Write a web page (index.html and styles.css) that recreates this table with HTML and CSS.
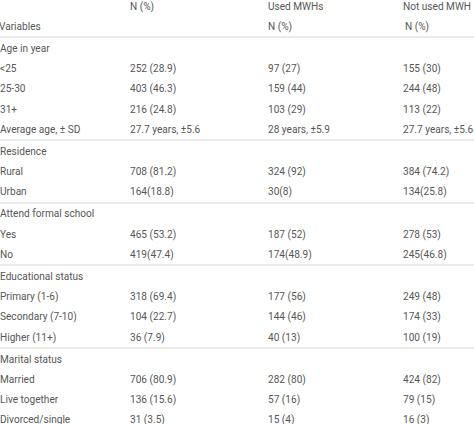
FILE: index.html
```html
<!DOCTYPE html>
<html>
<head>
<meta charset="utf-8">
<link rel="stylesheet" href="styles.css">
</head>
<body>
<div class="table">
  <div class="row"><div></div><div>N (%)</div><div>Used MWHs</div><div>Not used MWH</div></div>
  <div class="row"><div class="first">Variables</div><div></div><div>N (%)</div><div class="nudge">N (%)</div></div>
  <div class="row sep"><div>Age in year</div><div></div><div></div><div></div></div>
  <div class="row"><div>&lt;25</div><div>252 (28.9)</div><div>97 (27)</div><div>155 (30)</div></div>
  <div class="row"><div>25-30</div><div>403 (46.3)</div><div>159 (44)</div><div>244 (48)</div></div>
  <div class="row"><div>31+</div><div>216 (24.8)</div><div>103 (29)</div><div>113 (22)</div></div>
  <div class="row"><div>Average age, ± SD</div><div>27.7 years, ±5.6</div><div>28 years, ±5.9</div><div>27.7 years, ±5.6</div></div>
  <div class="row sep"><div>Residence</div><div></div><div></div><div></div></div>
  <div class="row"><div>Rural</div><div>708 (81.2)</div><div>324 (92)</div><div>384 (74.2)</div></div>
  <div class="row"><div>Urban</div><div>164(18.8)</div><div>30(8)</div><div>134(25.8)</div></div>
  <div class="row sep"><div>Attend formal school</div><div></div><div></div><div></div></div>
  <div class="row"><div>Yes</div><div>465 (53.2)</div><div>187 (52)</div><div>278 (53)</div></div>
  <div class="row"><div>No</div><div>419(47.4)</div><div>174(48.9)</div><div>245(46.8)</div></div>
  <div class="row sep"><div>Educational status</div><div></div><div></div><div></div></div>
  <div class="row"><div>Primary (1-6)</div><div>318 (69.4)</div><div>177 (56)</div><div>249 (48)</div></div>
  <div class="row"><div>Secondary (7-10)</div><div>104 (22.7)</div><div>144 (46)</div><div>174 (33)</div></div>
  <div class="row"><div>Higher (11+)</div><div>36 (7.9)</div><div>40 (13)</div><div>100 (19)</div></div>
  <div class="row sep"><div>Marital status</div><div></div><div></div><div></div></div>
  <div class="row"><div>Married</div><div>706 (80.9)</div><div>282 (80)</div><div>424 (82)</div></div>
  <div class="row"><div>Live together</div><div>136 (15.6)</div><div>57 (16)</div><div>79 (15)</div></div>
  <div class="row"><div>Divorced/single</div><div>31 (3.5)</div><div>15 (4)</div><div>16 (3)</div></div>
</div>
</body>
</html>
```
FILE: styles.css
```css
html, body {
  margin: 0;
  padding: 0;
  background: #ffffff;
  overflow: hidden;
}
.table {
  margin-top: -4px;
  font-family: Roboto, "Liberation Sans", sans-serif;
  font-size: 10.1px;
  color: #575757;
  width: 474px;
}
.row {
  display: grid;
  grid-template-columns: 130px 138px 135px 71px;
  height: 20.2px;
  align-items: center;
  white-space: nowrap;
}
.row.sep {
  border-top: 2px solid #ebebeb;
}
.first {
  margin-left: -1px;
}
.nudge {
  padding-left: 2px;
}
```
